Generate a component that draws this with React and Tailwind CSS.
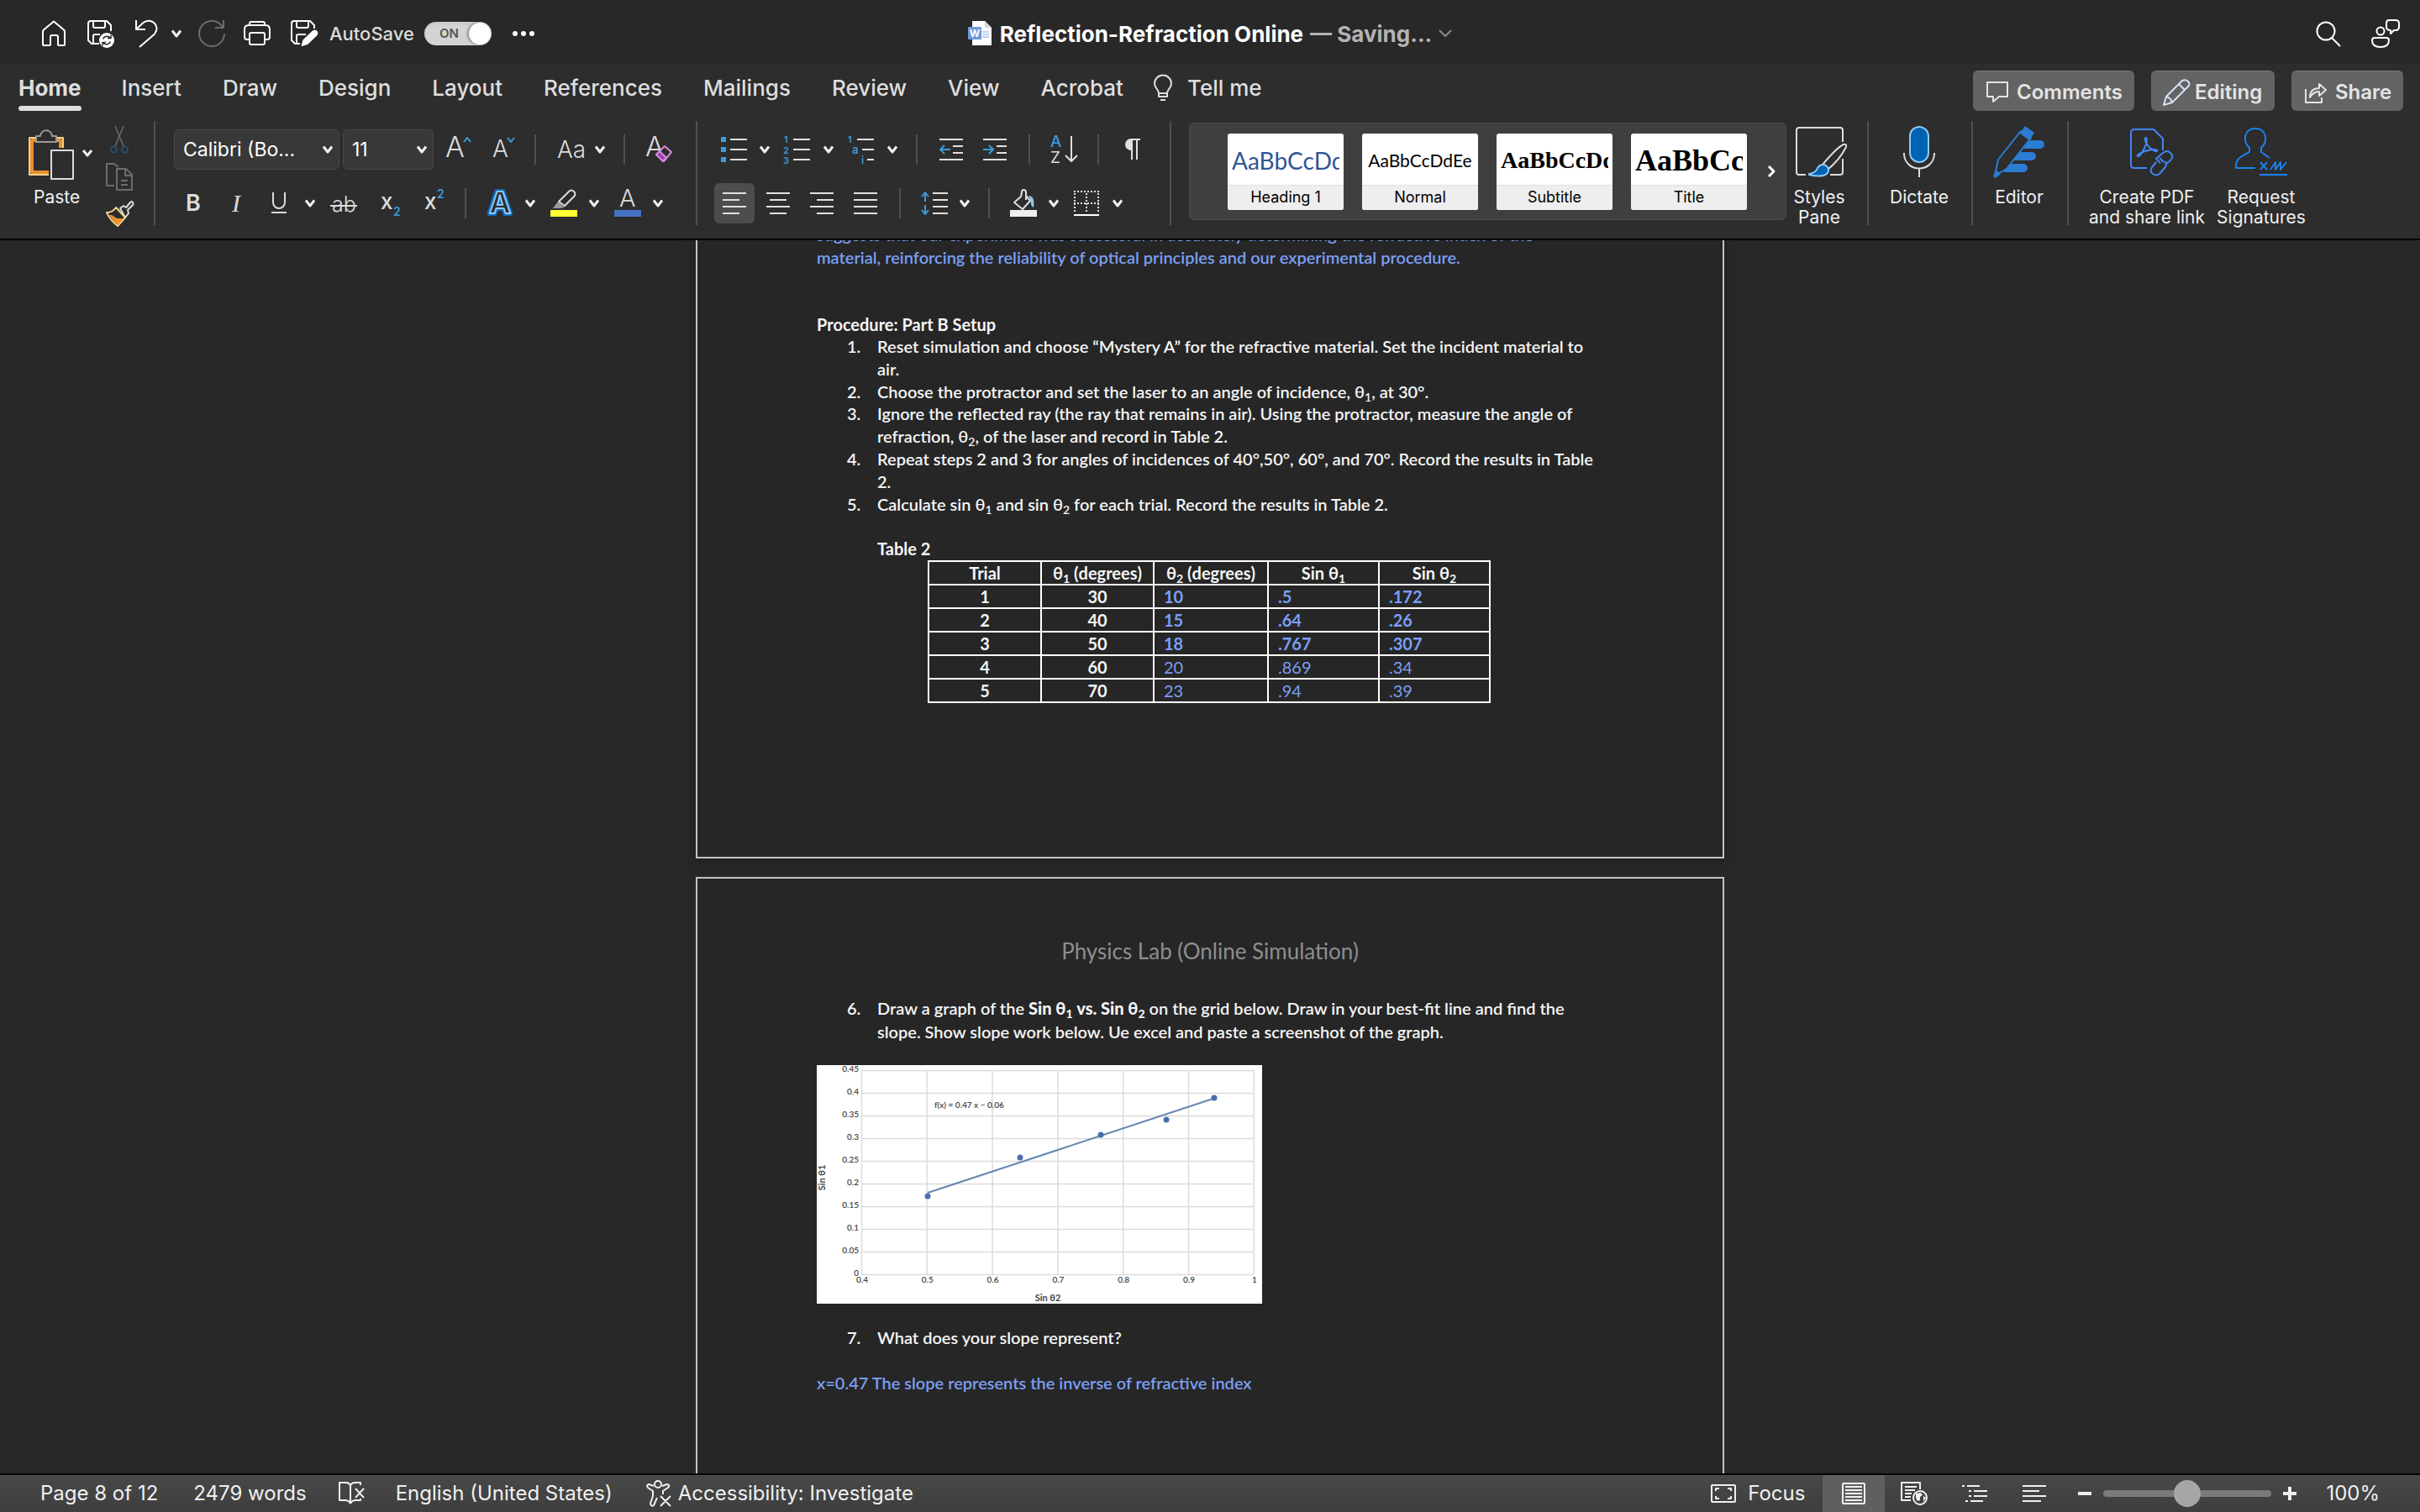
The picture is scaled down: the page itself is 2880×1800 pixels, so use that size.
const UI = "font-['Inter','Liberation_Sans',sans-serif]";

function Svg({ w, h, className = "", children, sw = 2 }) {
  return (
    <svg
      width={w}
      height={h}
      viewBox={`0 0 ${w} ${h}`}
      fill="none"
      stroke="currentColor"
      strokeWidth={sw}
      strokeLinecap="butt"
      strokeLinejoin="round"
      className={`shrink-0 overflow-visible ${className}`}
      aria-hidden="true"
    >
      {children}
    </svg>
  );
}

function Chevron({ className = "" }) {
  return (
    <Svg w={12} h={10} sw={3} className={`text-[#f0f0f0] ${className}`}>
      <path d="M1 1.5 6 8 11 1.5" />
    </Svg>
  );
}

function IconButton({ label, className = "", children }) {
  return (
    <button type="button" aria-label={label} className={`flex shrink-0 items-center justify-center ${className}`}>
      {children}
    </button>
  );
}

function MenuArrow({ label, className = "" }) {
  return (
    <IconButton label={label} className={`h-9 w-3 ${className}`}>
      <Chevron />
    </IconButton>
  );
}

function Rule({ className = "" }) {
  return <div className={`h-9 w-[2px] shrink-0 bg-[#505050] ${className}`} />;
}

function Divider({ className = "" }) {
  return <div className={`h-[124px] w-[2px] shrink-0 bg-[#505050] ${className}`} />;
}

function TitleBar() {
  return (
    <header className="grid h-[76px] shrink-0 grid-cols-[1fr_auto_1fr] items-center bg-[#282828] pt-1 text-[#e6e6e6]">
      <div className="flex items-center pl-12">
        <IconButton label="Home" className="w-8 text-white">
          <Svg w={32} h={34}>
            <path d="M3 31V14.500q0-1 1-2L16 2.500 28 12.500q1 1 1 2V30q0 1-1 1H22q-1 0-1-1V21q0-2-2-2h-5q-2 0-2 2v9q0 1-1 1H4q-1 0-1-1" />
          </Svg>
        </IconButton>
        <IconButton label="Save" className="ml-6 w-8 text-white">
          <Svg w={32} h={34}>
            <path d="M14 29H5L1 25V5q0-3 3-3H23l5 5V14M7 2V8q0 2 2 2H19q2 0 2-2V2M7 29V20q0-2 2-2h6" />
            <circle cx="23" cy="25" r="9" fill="#fff" stroke="none" />
            <path d="M18.500 23.500a5 5 0 0 1 8.500-1.500M27.500 26.500a5 5 0 0 1-8.500 1.500M28 18.500v4h-4M18 31.500v-4h4" stroke="#282828" strokeWidth="1.500" />
          </Svg>
        </IconButton>
        <IconButton label="Undo" className="ml-6 w-7 text-white">
          <Svg w={28} h={34}>
            <path d="M2 1V12H13M2 12 10.500 4C19-3 32 7 24 17.500L6 33" />
          </Svg>
        </IconButton>
        <MenuArrow label="Undo history" className="ml-4" />
        <IconButton label="Redo" className="ml-5 w-8 text-[#6c6c6c]">
          <Svg w={32} h={34}>
            <path d="M29 9.500A15 15 0 1 0 31 17M30 1V10H20" />
          </Svg>
        </IconButton>
        <IconButton label="Print" className="ml-[22px] w-8 text-white">
          <Svg w={32} h={34}>
            <path d="M7 24H4q-3 0-3-3V12q0-5 5-5H26q5 0 5 5v9q0 3-3 3H25M7 7V5q0-2 2-2H23q2 0 2 2V7" />
            <rect x="7" y="16" width="18" height="14" rx="2" />
          </Svg>
        </IconButton>
        <IconButton label="Save as" className="ml-6 w-8 text-white">
          <Svg w={32} h={34}>
            <path d="M11 29H5L1 25V5q0-3 3-3H23l5 5V11M7 2V8q0 2 2 2H19q2 0 2-2V2M7 29V20q0-2 2-2h9" />
            <path d="M13 31.500l2-7L26 14q3-2 5 0t0 5L20 29.500Z" fill="currentColor" strokeWidth="1" />
          </Svg>
        </IconButton>
        <label className="ml-[14px] flex items-center text-[22px] font-medium text-[#dcdcdc]">
          AutoSave
          <span className="relative ml-3 block h-7 w-20">
            <input
              type="checkbox"
              role="switch"
              defaultChecked
              className="block h-7 w-20 appearance-none rounded-full bg-[#d4d4d4] shadow-inner"
            />
            <span className="pointer-events-none absolute inset-y-0 left-[18px] flex items-center text-[15px] font-semibold text-[#555]">
              ON
            </span>
            <span className="pointer-events-none absolute top-[1px] right-[1px] size-[26px] rounded-full bg-white shadow-[-2px_0_3px_rgba(0,0,0,0.35)]" />
          </span>
        </label>
        <IconButton label="More" className="ml-6 w-7 text-white">
          <Svg w={28} h={34}>
            <g fill="currentColor" stroke="none">
              <circle cx="4" cy="17" r="3" />
              <circle cx="14" cy="17" r="3" />
              <circle cx="24" cy="17" r="3" />
            </g>
          </Svg>
        </IconButton>
      </div>
      <h1 className="flex items-center text-[26px] font-bold text-white">
        <Svg w={28} h={30} className="mr-2.5">
          <path d="M5 0H20L28 8V29H5Z" fill="#fff" stroke="none" />
          <path d="M20 0V8H28Z" fill="#d5d5d5" stroke="none" />
          <path d="M17 13H25M17 16H25M17 19H25" stroke="#7ba6e0" strokeWidth="1" />
          <rect x="0" y="7" width="16" height="15" rx="1" fill="#6f97d8" stroke="none" />
          <text x="8" y="19" textAnchor="middle" fontSize="12" fontWeight="700" fill="#fff" stroke="none" fontFamily="Inter, sans-serif">W</text>
        </Svg>
        Reflection-Refraction Online
        <span className="ml-2 text-[#b4b4b4]">— Saving...</span>
        <Svg w={16} h={10} className="ml-2 text-[#8c8c8c]">
          <path d="M1 1 8 8 15 1" />
        </Svg>
      </h1>
      <div className="flex items-center justify-end gap-9 pr-6 text-white">
        <IconButton label="Search">
          <Svg w={30} h={32}>
            <circle cx="12" cy="13" r="10.500" />
            <path d="M19 21 29 31" />
          </Svg>
        </IconButton>
        <IconButton label="Presence">
          <Svg w={34} h={34}>
            <circle cx="11" cy="14" r="4.500" />
            <path d="M4 22H18q3 0 3 3 0 8-10 8T1 25q0-3 3-3ZM21 1h8q4 0 4 4v4q0 4-4 4h-2l-4 4V13q-5 0-5-4V5q0-4 3-4Z" />
          </Svg>
        </IconButton>
      </div>
    </header>
  );
}

const tabs = ["Insert", "Draw", "Design", "Layout", "References", "Mailings", "Review", "View", "Acrobat"];

function Tabs() {
  const action = "flex h-12 items-center rounded-md border-t border-[#7a7a7a] bg-[#636363] pt-0.5 text-[24px] font-semibold text-[#e4e4e4]";
  return (
    <div className="flex h-[68px] items-start justify-between bg-[#2d2d2d] pr-5">
      <nav className="flex items-start pt-3 pl-[22px] text-[26px] leading-[34px] font-medium text-[#dedede]">
        <button type="button" className="flex flex-col gap-1 font-bold">
          Home
          <span className="h-[6px] w-full rounded-full bg-[#dedede]" />
        </button>
        <div className="ml-12 flex gap-[49px]">
          {tabs.map((t) => (
            <button type="button" key={t}>{t}</button>
          ))}
        </div>
        <button type="button" className="ml-9 flex items-center">
          <Svg w={22} h={32} className="mr-[18px]">
            <path d="M6 22C6 17 1 16 1 10.500a10 10 0 0 1 20 0C21 16 16 17 16 22ZM6 22v4H16V22M8 30h6" />
          </Svg>
          Tell me
        </button>
      </nav>
      <div className="flex gap-5 pt-2">
        <button type="button" className={`${action} w-[192px] pl-4`}>
          <Svg w={26} h={26} className="mr-2.5">
            <path d="M1 1H25V18H15L8 24V18H1Z" />
          </Svg>
          Comments
        </button>
        <button type="button" className={`${action} w-[147px] pl-[14px]`}>
          <Svg w={32} h={32} className="mr-1.5 text-[#d5e2f5]">
            <path d="M1 31 4 21 23 2q4-2 7 1t0 6L11 28ZM4 21q5 1 7 7M19 6l7 7" />
          </Svg>
          Editing
        </button>
        <button type="button" className={`${action} w-[133px] pl-4`}>
          <Svg w={26} h={26} className="mr-2.5">
            <path d="M1 9V25H20V19M6 19C6 11 11 8 17 8V3l8 7-8 7V12C12 12 9 14 6 19Z" />
          </Svg>
          Share
        </button>
      </div>
    </div>
  );
}

function Select({ label, value, className }) {
  return (
    <div className={`relative shrink-0 ${className}`}>
      <select
        aria-label={label}
        className="h-12 w-full appearance-none rounded-md border border-[#484848] bg-[#383838] pl-2.5 text-[23px] text-white"
      >
        <option>{value}</option>
      </select>
      <Chevron className="pointer-events-none absolute top-[19px] right-2" />
    </div>
  );
}

function Letter({ x, y, size, children, weight = 300, fill = "#dcdcdc", ...rest }) {
  return (
    <text x={x} y={y} fontSize={size} fontWeight={weight} fill={fill} stroke="none" fontFamily="Inter, sans-serif" {...rest}>
      {children}
    </text>
  );
}

function Clipboard() {
  return (
    <div className="flex h-[124px] w-[183px] shrink-0 pl-[34px]">
      <button type="button" className="flex w-[92px] flex-col items-start pt-[10px] text-[21px] leading-6 text-[#f0f0f0]">
        <Svg w={78} h={60} className="mb-[9px]">
          <path d="M10 10H1V54H24M33 10H41V22" stroke="#f6d28b" strokeWidth="2" />
          <path d="M10 13H4V51H24M34 13H38V22" stroke="#e8912d" strokeWidth="4" />
          <path d="M9 15V8h5C15-1 27-1 28 8h5v7Z" fill="#2d2d2d" stroke="#9c9c9c" />
          <rect x="27" y="25" width="26" height="34" fill="#2d2d2d" stroke="#dcdcdc" />
          <path d="M65 25 70 31 75 25" stroke="#f0f0f0" strokeWidth="3" />
        </Svg>
        <span className="pl-1.5">Paste</span>
      </button>
      <div className="flex flex-col gap-3 pt-[6px]">
        <IconButton label="Cut">
          <Svg w={34} h={32} className="text-[#6c6c6c]">
            <path d="M11 0 21 24M21 0 11 24" strokeWidth="1.500" />
            <circle cx="9.500" cy="28" r="3.500" stroke="#2c4f69" />
            <circle cx="22.500" cy="28" r="3.500" stroke="#2c4f69" />
          </Svg>
        </IconButton>
        <IconButton label="Copy">
          <Svg w={34} h={32} className="text-[#6c6c6c]">
            <path d="M10 27H1V1H10l5 4M13 7H24l7 7V32H13ZM23 7v8h8M18 21h8M18 26h8" />
          </Svg>
        </IconButton>
        <IconButton label="Format painter">
          <Svg w={34} h={32}>
            <path d="M17 10l4-3 3 2 5-6q2-2 3 0t0 3L26 12l1 4-4 5Z" stroke="#dcdcdc" />
            <path d="M12 9 23 21 14 31Q5 24 1 15q7 0 11-6Z" stroke="#f6d28b" fill="#2d2d2d" />
            <path d="M4 18h3l6 4h8L14 30Q8 25 4 18Z" fill="#e8912d" stroke="none" />
          </Svg>
        </IconButton>
      </div>
    </div>
  );
}

function FontGroup() {
  return (
    <div className="flex w-[643px] shrink-0 flex-col pl-[22px]">
      <div className="flex h-[68px] items-center">
        <Select label="Font" value="Calibri (Bo..." className="w-[197px]" />
        <Select label="Font size" value="11" className="ml-1 w-[108px]" />
        <IconButton label="Increase font size" className="ml-[14px]">
          <Svg w={32} h={36}>
            <Letter x={0} y={27} size={34}>A</Letter>
            <path d="M22 9 26 4 30 9" stroke="#3d9bdc" />
          </Svg>
        </IconButton>
        <IconButton label="Decrease font size" className="ml-6">
          <Svg w={30} h={36}>
            <Letter x={0} y={27} size={28}>A</Letter>
            <path d="M18 4 22 9 26 4" stroke="#3d9bdc" />
          </Svg>
        </IconButton>
        <Rule className="ml-5" />
        <button type="button" className="ml-6 flex items-center text-[28px] leading-9 font-light text-[#dcdcdc]">
          <span className="w-9">Aa</span>
          <Chevron className="ml-2.5" />
        </button>
        <Rule className="ml-[22px]" />
        <IconButton label="Clear formatting" className="ml-6">
          <Svg w={32} h={36}>
            <Letter x={0} y={26} size={33}>A</Letter>
            <path d="M13 24 23 14l8 7-9 11Z" fill="#2d2d2d" stroke="#d58be0" />
            <path d="M13 24 17 20l8 8-4 4Z" fill="#a03ab0" stroke="#d58be0" />
          </Svg>
        </IconButton>
      </div>
      <div className="mt-1.5 flex h-12 items-center pl-3.5 text-[#dcdcdc]">
        <button type="button" aria-label="Bold" className="w-4 text-[27px] leading-9 font-semibold">B</button>
        <button type="button" aria-label="Italic" className="ml-9 w-4 font-['Liberation_Serif',serif] text-[30px] leading-9 italic">I</button>
        <button type="button" aria-label="Underline" className="ml-[34px] w-[18px]">
          <Svg w={18} h={28}>
            <path d="M2 1V13a7 7 0 0 0 14 0V1M0 25H18" />
          </Svg>
        </button>
        <MenuArrow label="Underline options" className="ml-[22px]" />
        <IconButton label="Strikethrough" className="ml-[18px]">
          <Svg w={32} h={28}>
            <Letter x={2} y={24} size={25}>ab</Letter>
            <path d="M0 17H32" />
          </Svg>
        </IconButton>
        <IconButton label="Subscript" className="ml-7">
          <Svg w={24} h={32}>
            <Letter x={0} y={23} size={26} weight={500}>x</Letter>
            <Letter x={15} y={31} size={14} weight={600} fill="#3d9bdc">2</Letter>
          </Svg>
        </IconButton>
        <IconButton label="Superscript" className="ml-7">
          <Svg w={24} h={32}>
            <Letter x={0} y={23} size={26} weight={500}>x</Letter>
            <Letter x={15} y={10} size={14} weight={600} fill="#3d9bdc">2</Letter>
          </Svg>
        </IconButton>
        <Rule className="ml-6" />
        <IconButton label="Text effects" className="ml-6">
          <Svg w={32} h={32}>
            <Letter x={3} y={28} size={35} weight={700} fill="#2d2d2d" stroke="#0f6cbd" strokeWidth="6" style={{ paintOrder: "stroke" }}>A</Letter>
            <Letter x={3} y={28} size={35} weight={700} fill="#2d2d2d" stroke="#8ccaf5" strokeWidth="2">A</Letter>
          </Svg>
        </IconButton>
        <MenuArrow label="Text effect options" className="ml-3.5" />
        <IconButton label="Highlight colour" className="ml-[18px]">
          <Svg w={32} h={34}>
            <path d="M10 15 22 3q3-3 6 0t0 6L17 20Z" />
            <path d="M9 15l8 7-6 1H3Z" fill="#9a9a9a" stroke="none" />
            <rect x="0" y="25" width="32" height="8" fill="#ffff33" stroke="none" />
          </Svg>
        </IconButton>
        <MenuArrow label="Highlight options" className="ml-3.5" />
        <IconButton label="Font colour" className="ml-[18px]">
          <Svg w={32} h={34}>
            <Letter x={6} y={21} size={29}>A</Letter>
            <rect x="0" y="25" width="32" height="8" fill="#4472c4" stroke="none" />
          </Svg>
        </IconButton>
        <MenuArrow label="Font colour options" className="ml-3.5" />
      </div>
    </div>
  );
}

function Lines({ rows, w = 28, label, active = false }) {
  return (
    <IconButton label={label} className={`h-12 w-12 rounded-md ${active ? "bg-[#4d4d4d]" : ""}`}>
      <Svg w={w} h={26} className="text-[#e0e0e0]">
        {rows.map(([a, b], i) => (
          <path key={i} d={`M${a} ${1 + i * 8}H${b}`} />
        ))}
      </Svg>
    </IconButton>
  );
}

function ParagraphGroup() {
  return (
    <div className="flex w-[562px] shrink-0 flex-col text-[#e0e0e0]">
      <div className="flex h-[68px] items-center pl-7">
        <IconButton label="Bullets">
          <Svg w={31} h={32}>
            <path d="M11 4H31M11 16H31M11 28H31" />
            <path d="M0 4H6M0 16H6M0 28H6" stroke="#3d9bdc" strokeWidth="6" />
          </Svg>
        </IconButton>
        <MenuArrow label="Bullet options" className="ml-[15px]" />
        <IconButton label="Numbering" className="ml-4">
          <Svg w={32} h={32}>
            <path d="M12 4H32M12 16H32M12 28H32" />
            <Letter x={1} y={8} size={11} weight={600} fill="#3d9bdc">1</Letter>
            <Letter x={0} y={21} size={11} weight={600} fill="#3d9bdc">2</Letter>
            <Letter x={0} y={33} size={11} weight={600} fill="#3d9bdc">3</Letter>
          </Svg>
        </IconButton>
        <MenuArrow label="Numbering options" className="ml-4" />
        <IconButton label="Multilevel list" className="ml-4">
          <Svg w={32} h={32}>
            <path d="M12 4H32M18 16H32M24 28H32" />
            <Letter x={1} y={8} size={11} weight={600} fill="#3d9bdc">1</Letter>
            <Letter x={6} y={21} size={13} weight={600} fill="#3d9bdc">a</Letter>
            <Letter x={17} y={33} size={12} weight={600} fill="#3d9bdc">i</Letter>
          </Svg>
        </IconButton>
        <MenuArrow label="Multilevel options" className="ml-4" />
        <Rule className="ml-[22px]" />
        <IconButton label="Decrease indent" className="ml-[26px]">
          <Svg w={28} h={28}>
            <path d="M0 2H28M16 10H28M16 18H28M0 26H28" />
            <path d="M13 14H1M6 9 1 14l5 5" stroke="#3d9bdc" />
          </Svg>
        </IconButton>
        <IconButton label="Increase indent" className="ml-6">
          <Svg w={28} h={28}>
            <path d="M0 2H28M16 10H28M16 18H28M0 26H28" />
            <path d="M0 14H12M7 9l5 5-5 5" stroke="#3d9bdc" />
          </Svg>
        </IconButton>
        <Rule className="ml-[26px]" />
        <IconButton label="Sort" className="ml-6">
          <Svg w={32} h={34}>
            <Letter x={0} y={14} size={19} weight={500} fill="#3d9bdc">A</Letter>
            <Letter x={0} y={33} size={19} weight={400}>Z</Letter>
            <path d="M25 1V31M18 24l7 7 7-7" />
          </Svg>
        </IconButton>
        <Rule className="ml-6" />
        <IconButton label="Show formatting marks" className="ml-7">
          <Svg w={22} h={26}>
            <path d="M10 1H21M11 1V25M17 1V25" />
            <path d="M10 0V14a7 7 0 0 1 0-14Z" fill="currentColor" stroke="none" />
          </Svg>
        </IconButton>
      </div>
      <div className="mt-1.5 flex h-12 items-center pl-5">
        <div className="flex gap-1">
          <Lines label="Align left" active rows={[[0, 28], [0, 20], [0, 28], [0, 20]]} />
          <Lines label="Centre" rows={[[0, 28], [4, 24], [0, 28], [4, 24]]} />
          <Lines label="Align right" rows={[[0, 28], [8, 28], [0, 28], [8, 28]]} />
          <Lines label="Justify" rows={[[0, 28], [0, 28], [0, 28], [0, 28]]} />
        </div>
        <Rule className="ml-4" />
        <IconButton label="Line spacing" className="ml-6">
          <Svg w={32} h={28}>
            <path d="M14 2H32M14 10H32M14 18H32M14 26H32" />
            <path d="M5 1V12M1 6 5 1 9 6M5 16V27M1 22 5 27 9 22" stroke="#3d9bdc" />
          </Svg>
        </IconButton>
        <MenuArrow label="Line spacing options" className="ml-3.5" />
        <Rule className="ml-[22px]" />
        <IconButton label="Shading" className="ml-6">
          <Svg w={32} h={34}>
            <path d="M19 13V4q0-3-3-3-2 0-2 3l-1 5-8 7 10 8 9-10-5-6" />
            <path d="M22 8q8 0 6 14-4-2-3-8Z" fill="#8ccaf5" stroke="none" />
            <rect x="0" y="25" width="32" height="8" fill="#efefef" stroke="none" />
          </Svg>
        </IconButton>
        <MenuArrow label="Shading options" className="ml-3.5" />
        <IconButton label="Borders" className="ml-[18px]">
          <Svg w={30} h={32}>
            <path d="M0 2H30M0 16H30M1 4V26M15 4V26M29 4V26" strokeDasharray="2 2" />
            <path d="M0 30H30" stroke="#fff" />
          </Svg>
        </IconButton>
        <MenuArrow label="Border options" className="ml-4" />
      </div>
    </div>
  );
}

const styles = [
  { name: "Heading 1", sample: "AaBbCcDd", cls: "justify-start font-['Lato',sans-serif] text-[28px] text-[#2f5597]" },
  { name: "Normal", sample: "AaBbCcDdEe", cls: "justify-center font-['Lato',sans-serif] text-[21px] text-black" },
  { name: "Subtitle", sample: "AaBbCcDd", cls: "justify-start font-['Liberation_Serif',serif] text-[28px] font-bold text-black" },
  { name: "Title", sample: "AaBbCc", cls: "justify-start font-['Liberation_Serif',serif] text-[36px] font-bold text-black" },
];

function Gallery() {
  return (
    <div className="mt-[2px] ml-[21px] flex h-[116px] w-[711px] shrink-0 items-center rounded-md border border-[#4c4c4c] bg-[#3f3f3f] pl-[45px]">
      <div className="flex gap-[22px]">
        {styles.map((s) => (
          <button type="button" key={s.name} className="flex h-[91px] w-[138px] flex-col overflow-hidden rounded-[3px] bg-white">
            <span className="flex h-[61px] w-full px-[5px]">
              <span className={`flex w-full items-center overflow-hidden pt-1 whitespace-nowrap ${s.cls}`}>{s.sample}</span>
            </span>
            <span className="flex w-full flex-1 items-center justify-center border-t border-[#e0e0e0] bg-[#eeeeee] pb-0.5 text-[18px] text-black">
              {s.name}
            </span>
          </button>
        ))}
      </div>
      <IconButton label="More styles" className="ml-[25px]">
        <Svg w={9} h={14} sw={3} className="text-white">
          <path d="M1 1 7 7 1 13" />
        </Svg>
      </IconButton>
    </div>
  );
}

function BigButton({ children, lines, className }) {
  return (
    <button type="button" className={`flex shrink-0 flex-col items-center pt-[6px] text-[21px] leading-6 whitespace-nowrap text-[#f0f0f0] ${className}`}>
      <span className="flex h-[66px] items-center pb-1">{children}</span>
      <span className="mt-[7px] flex flex-col items-center">
        {lines.map((l) => (
          <span key={l}>{l}</span>
        ))}
      </span>
    </button>
  );
}

function Ribbon() {
  return (
    <div className="flex h-[140px] items-start overflow-hidden bg-[#2d2d2d]">
      <Clipboard />
      <Divider />
      <FontGroup />
      <Divider />
      <ParagraphGroup />
      <Divider />
      <Gallery />
      <BigButton lines={["Styles", "Pane"]} className="w-[78px]">
        <Svg w={60} h={60} className="ml-1">
          <path d="M12 57H4q-3 0-3-3V4q0-3 3-3H53q3 0 3 3V18M56 38V54q0 3-3 3H41" stroke="#dcdcdc" />
          <path d="M32 45C42 33 50 24 57 21q4-1 3 3C56 32 50 41 38 51" stroke="#dcdcdc" />
          <path d="M16 56Q24 55 26 49 30 43 36 46 41 50 38 55 32 61 16 57Z" fill="#0063b1" stroke="#8ccaf5" />
        </Svg>
      </BigButton>
      <Divider className="ml-[18px]" />
      <BigButton lines={["Dictate"]} className="w-[122px] pr-0.5">
        <Svg w={38} h={62}>
          <rect x="8" y="1" width="22" height="42" rx="11" fill="#0063b1" stroke="#8ccaf5" />
          <path d="M1 32V34C3 56 35 56 37 34V32M19 50V61" stroke="#dcdcdc" />
        </Svg>
      </BigButton>
      <Divider />
      <BigButton lines={["Editor"]} className="w-[112px] pr-0.5">
        <Svg w={62} h={62}>
          <g fill="#2b7cd3" stroke="none">
            <path d="M42 17H56a5 5 0 0 1 0 10H36ZM31 31H46a5 5 0 0 1 0 10H24ZM20 45H36a5 5 0 0 1 0 10H12Z" />
          </g>
          <path d="M2 59 6 40 33 6 45 14 16 51Z" fill="#2d2d2d" stroke="#2b7cd3" strokeWidth="2" />
          <path d="M38 0 49 8 43 17 32 9ZM0 60 3 52 9 57 3 62Z" fill="#2b7cd3" stroke="none" />
        </Svg>
      </BigButton>
      <Divider />
      <BigButton lines={["Create PDF", "and share link"]} className="ml-5 w-[146px]">
        <Svg w={52} h={58} className="ml-3 text-[#4285f4]">
          <path d="M20 48H5q-4 0-4-4V6q0-4 4-4H28L39 13V27" />
          <path d="M19 12C15 12 20 24 30 28 34 29 33 25 26 26 14 28 7 33 9 34 13 35 23 15 19 12Z" />
          <path d="M36 42 31 37 39 30q5-4 9 0t1 8l-7 6M35 36l5 5M41 40q4 4 0 8l-6 7q-4 3-8 0t-1-8l5-6" />
        </Svg>
      </BigButton>
      <BigButton lines={["Request", "Signatures"]} className="w-[126px]">
        <Svg w={62} h={58} className="text-[#1b80f0]">
          <path d="M24 48H1C0 36 8 34 17 29V24C9 17 10 1 24 1S39 17 31 24V29L41 36M30 41l8 9M38 41l-8 9M42 50 48 41V50L54 41V50L61 41M29 56H62" />
        </Svg>
      </BigButton>
    </div>
  );
}

const th1 = <>θ<sub className="text-[14px] leading-none">1</sub></>;
const th2 = <>θ<sub className="text-[14px] leading-none">2</sub></>;

const steps = [
  <>Reset simulation and choose “Mystery A” for the refractive material. Set the incident material to<br />air.</>,
  <>Choose the protractor and set the laser to an angle of incidence, {th1}, at 30°.</>,
  <>Ignore the reflected ray (the ray that remains in air). Using the protractor, measure the angle of<br />refraction, {th2}, of the laser and record in Table 2.</>,
  <>Repeat steps 2 and 3 for angles of incidences of 40°,50°, 60°, and 70°. Record the results in Table<br />2.</>,
  <>Calculate sin {th1} and sin {th2} for each trial. Record the results in Table 2.</>,
];

const rows = [
  ["1", "30", "10", ".5", ".172"],
  ["2", "40", "15", ".64", ".26"],
  ["3", "50", "18", ".767", ".307"],
  ["4", "60", "20", ".869", ".34"],
  ["5", "70", "23", ".94", ".39"],
];

function DataTable() {
  const cell = "h-7 border-2 border-white p-0";
  return (
    <table className="ml-[132px] table-fixed border-collapse leading-[26px]">
      <colgroup>
        <col className="w-[134px]" />
        <col className="w-[134px]" />
        <col className="w-[136px]" />
        <col className="w-[132px]" />
        <col className="w-[132px]" />
      </colgroup>
      <thead>
        <tr>
          {["Trial", <>{th1} (degrees)</>, <>{th2} (degrees)</>, <>Sin {th1}</>, <>Sin {th2}</>].map((h, i) => (
            <th key={i} className={`${cell} font-bold whitespace-nowrap`}>{h}</th>
          ))}
        </tr>
      </thead>
      <tbody>
        {rows.map((r, i) => (
          <tr key={r[0]}>
            {r.map((v, j) =>
              j < 2 ? (
                <td key={j} className={`${cell} text-center font-bold`}>{v}</td>
              ) : (
                <td key={j} className={`${cell} pl-[11px] text-[#7b9ff2] ${i < 3 ? "font-bold" : "font-normal"}`}>{v}</td>
              )
            )}
          </tr>
        ))}
      </tbody>
    </table>
  );
}

const xTicks = ["0.4", "0.5", "0.6", "0.7", "0.8", "0.9", "1"];
const yTicks = ["0.45", "0.4", "0.35", "0.3", "0.25", "0.2", "0.15", "0.1", "0.05", "0"];
const points = [[132, 156], [242, 110], [338, 83], [416, 65], [473, 39]];

function Chart() {
  return (
    <svg width="530" height="284" viewBox="0 0 530 284" className="block overflow-hidden bg-white" fontFamily="Lato, sans-serif" fontSize="10" fill="#444" role="img" aria-label="Sin θ1 against Sin θ2">
      <g stroke="#dcdcdc" strokeWidth="1.500">
        {xTicks.map((t, i) => (
          <path key={t} d={`M${53.500 + i * 77.800} 6V249`} />
        ))}
        {yTicks.map((t, i) => (
          <path key={t} d={`M53 ${6.500 + i * 27}H520`} />
        ))}
      </g>
      {xTicks.map((t, i) => (
        <text key={t} x={54 + i * 77.800} y={259} textAnchor="middle">{t}</text>
      ))}
      {yTicks.map((t, i) => (
        <text key={t} x={50} y={7.500 + i * 27} textAnchor="end">{t}</text>
      ))}
      <text x="140" y="51">f(x) = 0.47 x − 0.06</text>
      <text x="275" y="281" textAnchor="middle" fontSize="11" fontWeight="700">Sin θ2</text>
      <text transform="translate(10 134) rotate(-90)" textAnchor="middle" fontSize="11" fontWeight="700">Sin θ1</text>
      <path d="M132 152 473 39.500" stroke="#6487ad" strokeWidth="2" />
      {points.map(([x, y]) => (
        <circle key={x} cx={x} cy={y} r="3.500" fill="#4a6fae" />
      ))}
    </svg>
  );
}

function Item({ n, className = "", children }) {
  return (
    <li className={`flex ${className}`}>
      <span className="w-9 shrink-0">{n}.</span>
      <span className="whitespace-nowrap">{children}</span>
    </li>
  );
}

function Doc() {
  return (
    <main className="min-h-0 flex-1 overflow-hidden bg-[#282828] font-['Lato','Noto_Sans',sans-serif] text-[20px] leading-[27px] font-semibold text-[#f5f5f5]">
      <article className="mx-auto -mt-5 h-[756px] w-[1224px] border-2 border-t-0 border-[#c4c4c4] bg-[#262626] pl-[142px] shadow-[0_4px_12px_rgba(0,0,0,0.25)]">
        <p className="mb-[53px] text-[#7b9ff2]">
          suggests that our experiment was successful in accurately determining the refractive index of the
          <br />
          material, reinforcing the reliability of optical principles and our experimental procedure.
        </p>
        <h2 className="leading-[26px] font-bold">Procedure: Part B Setup</h2>
        <ol className="pl-9">
          {steps.map((s, i) => (
            <Item key={i} n={i + 1} className={i === 1 || i === 4 ? "leading-[26px]" : ""}>{s}</Item>
          ))}
        </ol>
        <h3 className="mt-[27px] pl-[72px] font-bold">Table 2</h3>
        <DataTable />
      </article>
      <article className="mx-auto mt-[22px] h-[1000px] w-[1224px] border-2 border-[#c4c4c4] bg-[#262626] pl-[142px]">
        <p className="mt-[68px] mr-[142px] text-center text-[26px] leading-9 font-normal text-[#8e8e8e]">
          Physics Lab (Online Simulation)
        </p>
        <ol className="mt-9 pl-9">
          <Item n={6} className="leading-7">
            Draw a graph of the <b>Sin {th1} vs. Sin {th2}</b> on the grid below. Draw in your best-fit line and find the
            <br />
            slope. Show slope work below. Ue excel and paste a screenshot of the graph.
          </Item>
        </ol>
        <div className="mt-[26px] mb-[27px]">
          <Chart />
        </div>
        <ol className="pl-9">
          <Item n={7}>What does your slope represent?</Item>
        </ol>
        <p className="mt-[27px] text-[#7b9ff2]">x=0.47 The slope represents the inverse of refractive index</p>
      </article>
    </main>
  );
}

function StatusBar() {
  return (
    <footer className="flex h-[46px] shrink-0 items-center border-t-2 border-black bg-linear-to-b from-[#484848] to-[#3e3e3e] text-[24px] text-[#f0f0f0]">
      <button type="button" className="ml-12">Page 8 of 12</button>
      <button type="button" className="ml-[42px]">2479 words</button>
      <IconButton label="Spelling" className="ml-[38px]">
        <Svg w={32} h={28}>
          <path d="M14 4Q12 1 9 1H1V22H8q4 0 6 4M14 4V26M14 4q2-3 5-3h7V4M14 26q2-4 6-4h6V20M20 8l10 11M30 8 20 19" />
        </Svg>
      </IconButton>
      <button type="button" className="ml-9">English (United States)</button>
      <button type="button" className="ml-10 flex items-center">
        <Svg w={32} h={32} className="mr-1.5">
          <circle cx="14" cy="5" r="4" />
          <path d="M9 7 3 5Q0 6 2 9l6 4v6L5 28q1 4 4 2l4-9M19 7l6-2q4 1 1 4l-6 4v4M17 19l12 12M29 19 17 31" />
        </Svg>
        Accessibility: Investigate
      </button>
      <div className="ml-auto flex h-full items-center pr-12">
        <button type="button" className="flex items-center">
          <Svg w={30} h={22} className="mr-3.5">
            <rect x="1" y="1" width="28" height="20" rx="1" />
            <path d="M6 8V5h4M20 5h4v3M24 14v3h-4M10 17H6v-3" />
          </Svg>
          Focus
        </button>
        <IconButton label="Print layout" className="ml-[21px] h-full w-[74px] bg-[#5f5f5f]">
          <Svg w={28} h={26}>
            <rect x="1" y="1" width="26" height="24" rx="1" />
            <path d="M4 5H24M4 9H24M4 13H24M4 17H24M4 21H24" />
          </Svg>
        </IconButton>
        <IconButton label="Web layout" className="ml-[19px]">
          <Svg w={32} h={28}>
            <path d="M12 22H1V1H23V9M5 6H19M5 10H17M5 14H13M5 18H12" />
            <circle cx="23" cy="19" r="8" />
            <path d="M18 14l6-1 2 3-3 2v4l-3 1-2-4ZM27 17l3 2-3 5Z" fill="currentColor" stroke="none" />
          </Svg>
        </IconButton>
        <IconButton label="Outline" className="ml-[41px]">
          <Svg w={30} h={22}>
            <path d="M0 2H3M6 2H21M8 8H11M14 8H30M8 14H11M14 14H30M4 20H7M10 20H25" />
          </Svg>
        </IconButton>
        <IconButton label="Draft" className="ml-[42px]">
          <Svg w={28} h={22}>
            <path d="M0 2H28M0 8H20M0 14H28M0 20H22" />
          </Svg>
        </IconButton>
        <IconButton label="Zoom out" className="ml-[38px]">
          <Svg w={16} h={16} sw={4}>
            <path d="M0 8H16" />
          </Svg>
        </IconButton>
        <input
          type="range"
          aria-label="Zoom"
          defaultValue={50}
          className="mx-3.5 h-8 w-[200px] appearance-none bg-transparent [&::-webkit-slider-runnable-track]:h-2 [&::-webkit-slider-runnable-track]:rounded-full [&::-webkit-slider-runnable-track]:bg-[#7a7a7a] [&::-webkit-slider-thumb]:-mt-3 [&::-webkit-slider-thumb]:size-8 [&::-webkit-slider-thumb]:appearance-none [&::-webkit-slider-thumb]:rounded-full [&::-webkit-slider-thumb]:bg-[#a6a6a6]"
        />
        <IconButton label="Zoom in">
          <Svg w={16} h={16} sw={4}>
            <path d="M0 8H16M8 0V16" />
          </Svg>
        </IconButton>
        <button type="button" className="ml-[35px]">100%</button>
      </div>
    </footer>
  );
}

export default function App() {
  return (
    <div className={`flex h-screen w-full flex-col overflow-hidden bg-[#282828] ${UI}`}>
      <TitleBar />
      <Tabs />
      <Ribbon />
      <div className="h-[2px] shrink-0 bg-black" />
      <Doc />
      <StatusBar />
    </div>
  );
}
